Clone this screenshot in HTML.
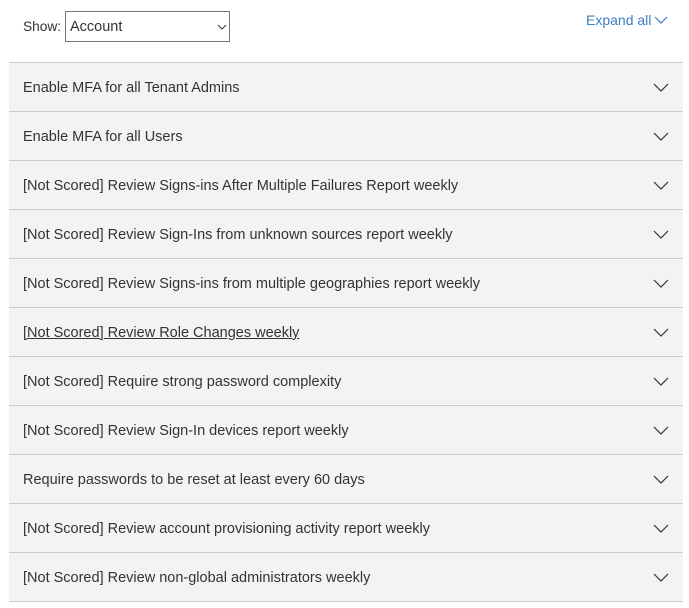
<!DOCTYPE html>
<html><head><style>
body{margin:0;background:#fff;font-family:"Liberation Sans",Arial,sans-serif;color:#333;width:689px;height:608px;overflow:hidden;position:relative}
.show{position:absolute;left:23px;top:19px;font-size:13.7px}
.sel{position:absolute;left:65px;top:11px;width:163px;height:29px;border:1px solid #777;box-sizing:content-box;font-size:14.5px}
.sel span{position:absolute;left:4px;top:7px}
.sel svg{position:absolute;left:151px;top:12px}
.exp{position:absolute;left:586px;top:12px;font-size:14px;color:#3b7fc4}
.exp svg{position:absolute;left:68px;top:4px}
.list{position:absolute;left:9px;top:62px;width:674px}
.row{height:48px;background:#f3f3f3;border-top:1px solid #ccc;position:relative;font-size:14.5px}
.row:last-child{border-bottom:1px solid #ccc}
.row span{position:absolute;left:14px;top:17px}
.row svg{position:absolute;left:644px;top:20px}
</style></head><body>
<div class="show">Show:</div>
<div class="sel"><span>Account</span><svg width="10" height="6"><path d="M1 1l4 4 4-4" stroke="#333" fill="none"/></svg></div>
<div class="exp">Expand all<svg width="14" height="9"><path d="M1 1l6 6 6-6" stroke="#3b7fc4" fill="none" stroke-width="1.2"/></svg></div>
<div class="list">
<div class="row"><span>Enable MFA for all Tenant Admins</span><svg width="16" height="9"><path d="M1 1l7 7 7-7" stroke="#333" fill="none" stroke-width="1.2"/></svg></div>
<div class="row"><span>Enable MFA for all Users</span><svg width="16" height="9"><path d="M1 1l7 7 7-7" stroke="#333" fill="none" stroke-width="1.2"/></svg></div>
<div class="row"><span>[Not Scored] Review Signs-ins After Multiple Failures Report weekly</span><svg width="16" height="9"><path d="M1 1l7 7 7-7" stroke="#333" fill="none" stroke-width="1.2"/></svg></div>
<div class="row"><span>[Not Scored] Review Sign-Ins from unknown sources report weekly</span><svg width="16" height="9"><path d="M1 1l7 7 7-7" stroke="#333" fill="none" stroke-width="1.2"/></svg></div>
<div class="row"><span>[Not Scored] Review Signs-ins from multiple geographies report weekly</span><svg width="16" height="9"><path d="M1 1l7 7 7-7" stroke="#333" fill="none" stroke-width="1.2"/></svg></div>
<div class="row"><span style="text-decoration:underline">[Not Scored] Review Role Changes weekly</span><svg width="16" height="9"><path d="M1 1l7 7 7-7" stroke="#333" fill="none" stroke-width="1.2"/></svg></div>
<div class="row"><span>[Not Scored] Require strong password complexity</span><svg width="16" height="9"><path d="M1 1l7 7 7-7" stroke="#333" fill="none" stroke-width="1.2"/></svg></div>
<div class="row"><span>[Not Scored] Review Sign-In devices report weekly</span><svg width="16" height="9"><path d="M1 1l7 7 7-7" stroke="#333" fill="none" stroke-width="1.2"/></svg></div>
<div class="row"><span>Require passwords to be reset at least every 60 days</span><svg width="16" height="9"><path d="M1 1l7 7 7-7" stroke="#333" fill="none" stroke-width="1.2"/></svg></div>
<div class="row"><span>[Not Scored] Review account provisioning activity report weekly</span><svg width="16" height="9"><path d="M1 1l7 7 7-7" stroke="#333" fill="none" stroke-width="1.2"/></svg></div>
<div class="row"><span>[Not Scored] Review non-global administrators weekly</span><svg width="16" height="9"><path d="M1 1l7 7 7-7" stroke="#333" fill="none" stroke-width="1.2"/></svg></div>
</div>
</body></html>
